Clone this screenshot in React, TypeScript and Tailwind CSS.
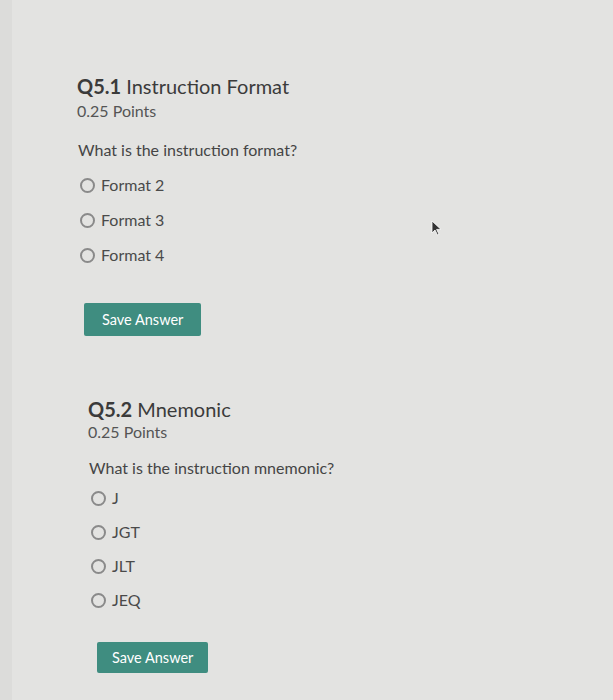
const Radio = () => (
  <span className="inline-block w-[15px] h-[15px] rounded-full border-2 border-[#8a8a8a] shrink-0" />
);

type QProps = {
  num: string;
  title: string;
  prompt: string;
  options: string[];
  pointsGap: string;
  promptGap: string;
  listGap: string;
  optionGap: string;
  buttonCls: string;
};

const Question = ({ num, title, prompt, options, pointsGap, promptGap, listGap, optionGap, buttonCls }: QProps) => (
  <div className="flex flex-col items-start">
    <h2 className="text-[20px] leading-[24px] text-[#3b3b3b]">
      <span className="font-bold">{num}</span> {title}
    </h2>
    <p className={`text-[16px] leading-[20px] text-[#555] ${pointsGap}`}>0.25 Points</p>
    <p className={`text-[16px] leading-[20px] text-[#454545] ml-[1px] ${promptGap}`}>{prompt}</p>
    <div className={`flex flex-col ${listGap} ${optionGap}`}>
      {options.map((o) => (
        <label key={o} className="flex items-center gap-[6px] h-[20px] text-[16px] text-[#4a4a4a] ml-[3px]">
          <Radio />
          {o}
        </label>
      ))}
    </div>
    <button className={`bg-[#3f8d80] text-white text-[14.5px] rounded-[2px] ${buttonCls}`}>Save Answer</button>
  </div>
);

const App = () => {
  return (
    <div
      className="w-[613px] h-[700px] bg-[#e3e3e1] relative overflow-hidden"
      style={{ fontFamily: "Lato, 'Open Sans', sans-serif" }}
    >
      <div className="absolute left-0 top-0 w-[12px] h-full bg-[#dcdcda]" />
      <div className="flex flex-col pt-[74px] pl-[77px]">
        <Question
          num="Q5.1"
          title="Instruction Format"
          prompt="What is the instruction format?"
          options={["Format 2", "Format 3", "Format 4"]}
          pointsGap="mt-[3px]"
          promptGap="mt-[19px]"
          listGap="mt-[15px]"
          optionGap="gap-[15px]"
          buttonCls="mt-[38px] ml-[7px] h-[33px] px-[18px]"
        />
        <div className="mt-[61px] ml-[11px]">
          <Question
            num="Q5.2"
            title="Mnemonic"
            prompt="What is the instruction mnemonic?"
            options={["J", "JGT", "JLT", "JEQ"]}
            pointsGap="mt-[1px]"
            promptGap="mt-[16px]"
            listGap="mt-[10px]"
            optionGap="gap-[14px]"
            buttonCls="mt-[32px] ml-[9px] h-[31px] px-[15px]"
          />
        </div>
      </div>
      <svg className="absolute left-[431px] top-[220px]" width="12" height="16" viewBox="0 0 12 16">
        <path d="M1 1 L1 13 L4 10 L6.5 15 L8 14.3 L5.6 9.4 L10 9.4 Z" fill="#333" stroke="#fff" strokeWidth="0.8" />
      </svg>
    </div>
  );
};

export default App;
